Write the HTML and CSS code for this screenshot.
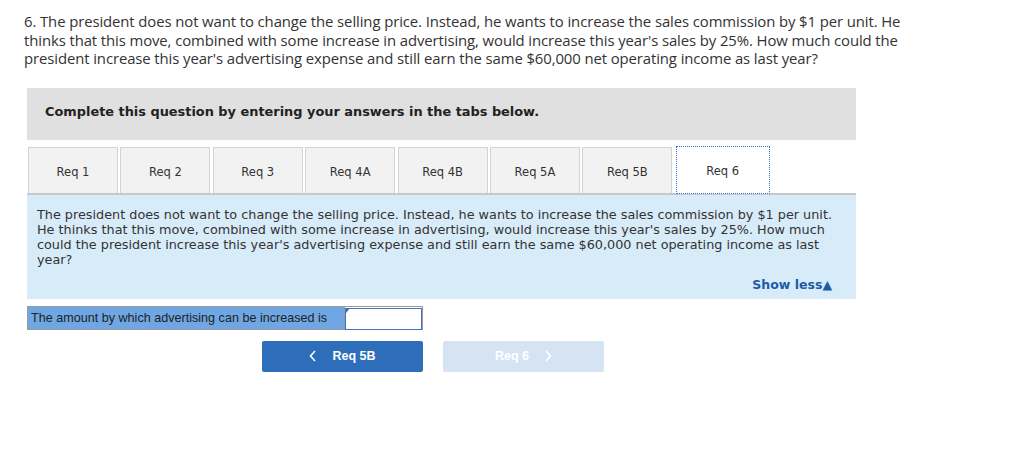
FILE: index.html
```html
<!DOCTYPE html>
<html lang="en">
<head>
    <meta charset="UTF-8">
    <title>Req 6</title>
    <link rel="stylesheet" href="styles.css">
</head>
<body>

    <p class="question">6. The president does not want to change the selling price. Instead, he wants to increase the sales commission by $1 per unit. He thinks that this move, combined with some increase in advertising, would increase this year's sales by 25%. How much could the president increase this year's advertising expense and still earn the same $60,000 net operating income as last year?</p>

    <div class="box">
        <div class="instructions">Complete this question by entering your answers in the tabs below.</div>

        <div class="tabs">
            <div class="tab">Req 1</div>
            <div class="tab">Req 2</div>
            <div class="tab">Req 3</div>
            <div class="tab">Req 4A</div>
            <div class="tab">Req 4B</div>
            <div class="tab">Req 5A</div>
            <div class="tab">Req 5B</div>
            <div class="tab active">Req 6</div>
        </div>

        <div class="panel">
            <p>The president does not want to change the selling price. Instead, he wants to increase the sales commission by $1 per unit. He thinks that this move, combined with some increase in advertising, would increase this year's sales by 25%. How much could the president increase this year's advertising expense and still earn the same $60,000 net operating income as last year?</p>
            <div class="show-less">Show less&#9650;</div>
        </div>

        <div class="answer">
            <div class="answer-label">The amount by which advertising can be increased is</div>
            <div class="answer-cell"><input type="text"></div>
        </div>

        <div class="nav">
            <button class="nav-btn prev">
                <svg class="chev" width="7" height="12" viewBox="0 0 7 12"><path d="M6 1 L1.5 6 L6 11" fill="none" stroke="#fff" stroke-width="1.6"/></svg>
                Req 5B
            </button>
            <button class="nav-btn next">
                Req 6
                <svg class="chev" width="7" height="12" viewBox="0 0 7 12"><path d="M1 1 L5.5 6 L1 11" fill="none" stroke="#fff" stroke-width="1.6"/></svg>
            </button>
        </div>
    </div>

</body>
</html>
```

FILE: styles.css
```css
body {
    margin: 0;
    background: #fff;
    font-family: 'Open Sans', sans-serif;
}

.question {
    margin: 12px 0 0 24px;
    width: 885px;
    font-size: 14.9px;
    line-height: 18.5px;
    color: #333;
    letter-spacing: -0.1px;
}

.box {
    margin: 20px 0 0 27px;
    width: 829px;
}

.instructions {
    background-color: #e0e0e0;
    height: 52px;
    padding: 0 0 5px 18px;
    box-sizing: border-box;
    display: flex;
    align-items: center;
    font-family: 'DejaVu Sans', Verdana, sans-serif;
    font-weight: bold;
    font-size: 12.9px;
    color: #222;
}

.tabs {
    display: flex;
    gap: 2.4px;
    margin-top: 7px;
    padding-left: 1px;
    border-bottom: 2px solid #c8c8c8;
    height: 46px;
}

.tab {
    width: 90px;
    height: 46px;
    box-sizing: border-box;
    padding-top: 3px;
    background-color: #f2f2f2;
    border: 1px solid #d4d4d4;
    border-bottom: none;
    display: flex;
    justify-content: center;
    align-items: center;
    font-family: 'DejaVu Sans', Verdana, sans-serif;
    font-size: 11.5px;
    color: #333;
}

.tab.active {
    background-color: #fff;
    border: 1px dotted #2f74c6;
    width: 94px;
    height: 48px;
    margin-top: -1px;
    margin-left: 1px;
}

.panel {
    background-color: #d8ebf9;
    padding: 12px 14px 7px 10px;
    height: 104px;
    box-sizing: border-box;
    display: flex;
    flex-direction: column;
    font-family: 'DejaVu Sans', Verdana, sans-serif;
    color: #333;
}

.panel p {
    margin: 0;
    font-size: 12.8px;
    line-height: 15px;
}

.show-less {
    margin-top: auto;
    text-align: right;
    margin-right: 10px;
    font-weight: bold;
    font-size: 12.5px;
    line-height: 15px;
    color: #1d5aa4;
}

.answer {
    display: flex;
    margin-top: 7px;
    width: 396px;
    height: 24px;
    border: 1px solid #9a9a9a;
    box-sizing: border-box;
}

.answer-label {
    width: 317px;
    box-sizing: border-box;
    background-color: #6fa7e4;
    border-right: 1px solid #9a9a9a;
    display: flex;
    align-items: center;
    padding-left: 3px;
    font-family: 'Liberation Sans', Arial, sans-serif;
    font-size: 12.6px;
    color: #222;
}

.answer-cell {
    flex: 1;
    position: relative;
    background-color: #fff;
}

.answer-cell input {
    width: 100%;
    height: 100%;
    box-sizing: border-box;
    border: 1px solid #3f76bd;
    margin: 0;
    padding: 0;
    outline: none;
}

.answer-cell::before {
    content: '';
    position: absolute;
    top: 1px;
    left: 1px;
    border-top: 5px solid #2f6fc0;
    border-right: 4px solid transparent;
}

.nav {
    display: flex;
    gap: 20px;
    margin: 11px 0 0 235px;
}

.nav-btn {
    width: 161px;
    height: 31px;
    border: none;
    border-radius: 2px;
    color: #fff;
    font-family: 'Liberation Sans', Arial, sans-serif;
    font-weight: bold;
    font-size: 12.5px;
    display: flex;
    justify-content: center;
    align-items: center;
    gap: 16px;
}

.nav-btn.prev {
    background-color: #2e6db9;
}

.nav-btn.next {
    background-color: #d5e3f3;
}

.chev {
    display: block;
}
```
